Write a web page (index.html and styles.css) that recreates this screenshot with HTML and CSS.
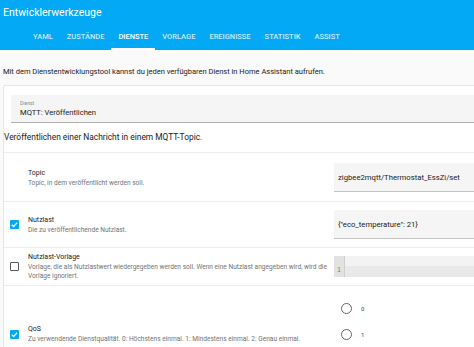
FILE: index.html
```html
<!DOCTYPE html>
<html lang="de">
<head>
<meta charset="utf-8">
<title>Entwicklerwerkzeuge</title>
<link rel="stylesheet" href="styles.css">
</head>
<body>
<header class="app-header">
  <div class="toolbar">Entwicklerwerkzeuge</div>
  <nav class="tabs">
    <div class="tab">YAML</div>
    <div class="tab">ZUSTÄNDE</div>
    <div class="tab active">DIENSTE</div>
    <div class="tab">VORLAGE</div>
    <div class="tab">EREIGNISSE</div>
    <div class="tab">STATISTIK</div>
    <div class="tab">ASSIST</div>
  </nav>
</header>
<main class="content">
  <p class="intro">Mit dem Dienstentwicklungstool kannst du jeden verfügbaren Dienst in Home Assistant aufrufen.</p>
  <section class="card">
    <div class="field">
      <span class="field-label">Dienst</span>
      <span class="field-value">MQTT: Veröffentlichen</span>
    </div>
    <p class="service-desc">Veröffentlichen einer Nachricht in einem MQTT-Topic.</p>

    <div class="row row-topic">
      <div class="check-col"></div>
      <div class="info">
        <div class="label">Topic</div>
        <div class="desc">Topic, in dem veröffentlicht werden soll.</div>
      </div>
      <div class="value">
        <div class="input">zigbee2mqtt/Thermostat_EssZi/set</div>
      </div>
    </div>

    <div class="row row-payload">
      <div class="check-col"><span class="checkbox checked"><svg viewBox="0 0 10 10" width="9" height="9"><path d="M2 5.2 L4.1 7.2 L8 2.9" fill="none" stroke="#fff" stroke-width="1.4"/></svg></span></div>
      <div class="info">
        <div class="label">Nutzlast</div>
        <div class="desc">Die zu veröffentlichende Nutzlast.</div>
      </div>
      <div class="value">
        <div class="input">{"eco_temperature": 21}</div>
      </div>
    </div>

    <div class="row row-template">
      <div class="check-col"><span class="checkbox"></span></div>
      <div class="info">
        <div class="label">Nutzlast-Vorlage</div>
        <div class="desc">Vorlage, die als Nutzlastwert wiedergegeben werden soll. Wenn eine Nutzlast angegeben wird, wird die Vorlage ignoriert.</div>
      </div>
      <div class="value">
        <div class="editor">
          <div class="gutter">1</div>
          <div class="code"><div class="code-pad"></div><div class="code-line"></div></div>
        </div>
      </div>
    </div>

    <div class="row row-qos">
      <div class="check-col"><span class="checkbox checked"><svg viewBox="0 0 10 10" width="9" height="9"><path d="M2 5.2 L4.1 7.2 L8 2.9" fill="none" stroke="#fff" stroke-width="1.4"/></svg></span></div>
      <div class="info">
        <div class="label">QoS</div>
        <div class="desc">Zu verwendende Dienstqualität. 0: Höchstens einmal. 1: Mindestens einmal. 2: Genau einmal.</div>
      </div>
      <div class="value">
        <div class="radios">
          <div class="radio-item"><span class="radio"></span><span class="radio-label">0</span></div>
          <div class="radio-item"><span class="radio"></span><span class="radio-label">1</span></div>
          <div class="radio-item"><span class="radio"></span><span class="radio-label">2</span></div>
        </div>
      </div>
    </div>
  </section>
</main>
</body>
</html>
```
FILE: styles.css
```css
html, body {
  margin: 0;
  padding: 0;
}
body {
  background: #fafafa;
  font-family: Roboto, "Noto Sans", sans-serif;
  color: #212121;
  overflow: hidden;
  width: 474px;
  height: 347px;
}
.app-header {
  background: #03a9f4;
  color: #fff;
}
.toolbar {
  height: 24px;
  display: flex;
  align-items: center;
  padding-left: 3px;
  font-size: 10.5px;
}
.tabs {
  display: flex;
  height: 26px;
  padding-left: 26px;
}
.tab {
  box-sizing: border-box;
  display: flex;
  align-items: center;
  padding: 0 7px;
  border-bottom: 2px solid transparent;
  font-size: 7.5px;
  font-weight: 500;
  color: rgba(255, 255, 255, 0.78);
}
.tab.active {
  color: #fff;
  border-bottom-color: #fff;
}
.content {
  padding-left: 3px;
}
.intro {
  margin: 17px 0 8px 0;
  font-size: 7.5px;
  line-height: 10px;
}
.card {
  background: #fff;
  border: 1px solid #e6e6e6;
  border-radius: 2px;
  margin-right: -30px;
  padding-top: 9px;
}
.field {
  margin-left: 7px;
  background: #f5f5f5;
  border-bottom: 1px solid #b0b0b0;
  padding: 5px 0 4px 9px;
  display: flex;
  flex-direction: column;
}
.field-label {
  font-size: 5px;
  line-height: 7px;
  color: #8a8a8a;
}
.field-value {
  font-size: 7.6px;
  line-height: 11px;
}
.service-desc {
  margin: 9px 0 0 0;
  padding: 0 0 10px 0;
  font-size: 8.4px;
  line-height: 10px;
}
.row {
  display: flex;
  align-items: center;
  border-top: 1px solid #eeeeee;
}
.row-topic { padding: 10px 0 9px 0; }
.row-payload { padding: 8px 0 8px 0; }
.row-template { padding: 4px 0 4px 0; }
.row-qos { padding: 9px 0 0 0; }
.check-col {
  flex: 0 0 24px;
  display: flex;
  align-items: center;
}
.checkbox {
  box-sizing: border-box;
  width: 9px;
  height: 9px;
  margin-left: 6px;
  border: 1.2px solid #5a5a5a;
  border-radius: 1px;
  display: block;
}
.checkbox.checked {
  background: #03a9f4;
  border: none;
}
.checkbox svg {
  display: block;
}
.info {
  flex: 0 0 306px;
  box-sizing: border-box;
  padding-right: 6px;
}
.label {
  font-size: 7px;
  line-height: 11px;
  color: #212121;
}
.desc {
  font-size: 6.6px;
  line-height: 9px;
  color: #737373;
}
.value {
  flex: 1;
}
.input {
  height: 28px;
  background: #f5f5f5;
  border-bottom: 1px solid #c4c4c4;
  display: flex;
  align-items: center;
  padding-left: 4px;
  font-size: 7.7px;
}
.editor {
  display: flex;
  height: 21px;
}
.gutter {
  flex: 0 0 11px;
  background: #e2e2e2;
  border-right: 1px solid #cfcfcf;
  font-size: 6.5px;
  color: #777;
  font-family: "DejaVu Sans Mono", monospace;
  text-align: right;
  padding-right: 3px;
  box-sizing: border-box;
  padding-top: 10px;
  line-height: 9px;
}
.code {
  flex: 1;
  display: flex;
  flex-direction: column;
}
.code-pad {
  height: 10px;
  background: #f3f3f3;
}
.code-line {
  flex: 1;
  background: #e9e9e9;
}
.radios {
  display: flex;
  flex-direction: column;
  padding-left: 7px;
}
.radio-item {
  height: 26px;
  display: flex;
  align-items: center;
}
.radio {
  box-sizing: border-box;
  width: 11px;
  height: 11px;
  border: 1.2px solid #666;
  border-radius: 50%;
  background: #fff;
}
.radio-label {
  margin-left: 9px;
  font-size: 6px;
  color: #444;
}
```
